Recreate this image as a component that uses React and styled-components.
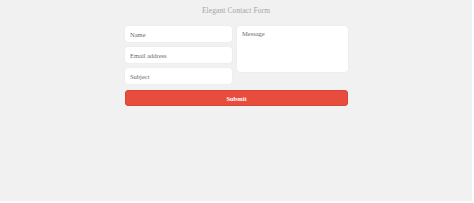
import React from 'react';
import styled, { createGlobalStyle } from 'styled-components';

const GlobalStyle = createGlobalStyle`
  html, body {
    margin: 0;
    padding: 0;
    background: #ffffff;
  }
  * { box-sizing: border-box; }
`;

const Page = styled.div`
  width: 472px;
  height: 201px;
  background: #f1f1f1;
  font-family: "Liberation Serif", "DejaVu Serif", serif;
`;

const Title = styled.h1`
  margin: 0;
  padding-top: 6px;
  height: 26px;
  text-align: center;
  font-size: 7.5px;
  font-weight: normal;
  letter-spacing: 0.1px;
  color: #a6a6a6;
`;

const Form = styled.form`
  width: 223px;
  margin: 0 0 0 125px;
  display: flex;
  flex-direction: column;
  gap: 6px;
`;

const Row = styled.div`
  display: grid;
  grid-template-columns: 107px 111px;
  gap: 5px;
`;

const Column = styled.div`
  display: flex;
  flex-direction: column;
  gap: 5px;
`;

const Field = styled.input`
  height: 16px;
  width: 100%;
  border: none;
  border-radius: 3px;
  background: #fff;
  box-shadow: 0 0 1px rgba(0, 0, 0, 0.12);
  padding: 0 5px;
  font-family: inherit;
  font-size: 6.5px;
  color: #555;
  outline: none;
  &::placeholder { color: #6a6a6a; }
`;

const Message = styled.textarea`
  height: 46px;
  width: 100%;
  border: none;
  border-radius: 3px;
  background: #fff;
  box-shadow: 0 0 1px rgba(0, 0, 0, 0.12);
  padding: 4px 5px;
  font-family: inherit;
  font-size: 6.5px;
  resize: none;
  outline: none;
  &::placeholder { color: #6a6a6a; }
`;

const Submit = styled.button`
  height: 16px;
  width: 100%;
  border: 1px solid #d4473a;
  border-radius: 3px;
  background: #e84c3d;
  color: #fff;
  font-family: inherit;
  font-size: 6.5px;
  font-weight: bold;
  padding: 0;
`;

export default function App() {
  return (
    <>
      <GlobalStyle />
      <Page>
        <Title>Elegant Contact Form</Title>
        <Form onSubmit={(e) => e.preventDefault()}>
          <Row>
            <Column>
              <Field placeholder="Name" />
              <Field placeholder="Email address" />
              <Field placeholder="Subject" />
            </Column>
            <Message placeholder="Message" />
          </Row>
          <Submit type="submit">Submit</Submit>
        </Form>
      </Page>
    </>
  );
}
